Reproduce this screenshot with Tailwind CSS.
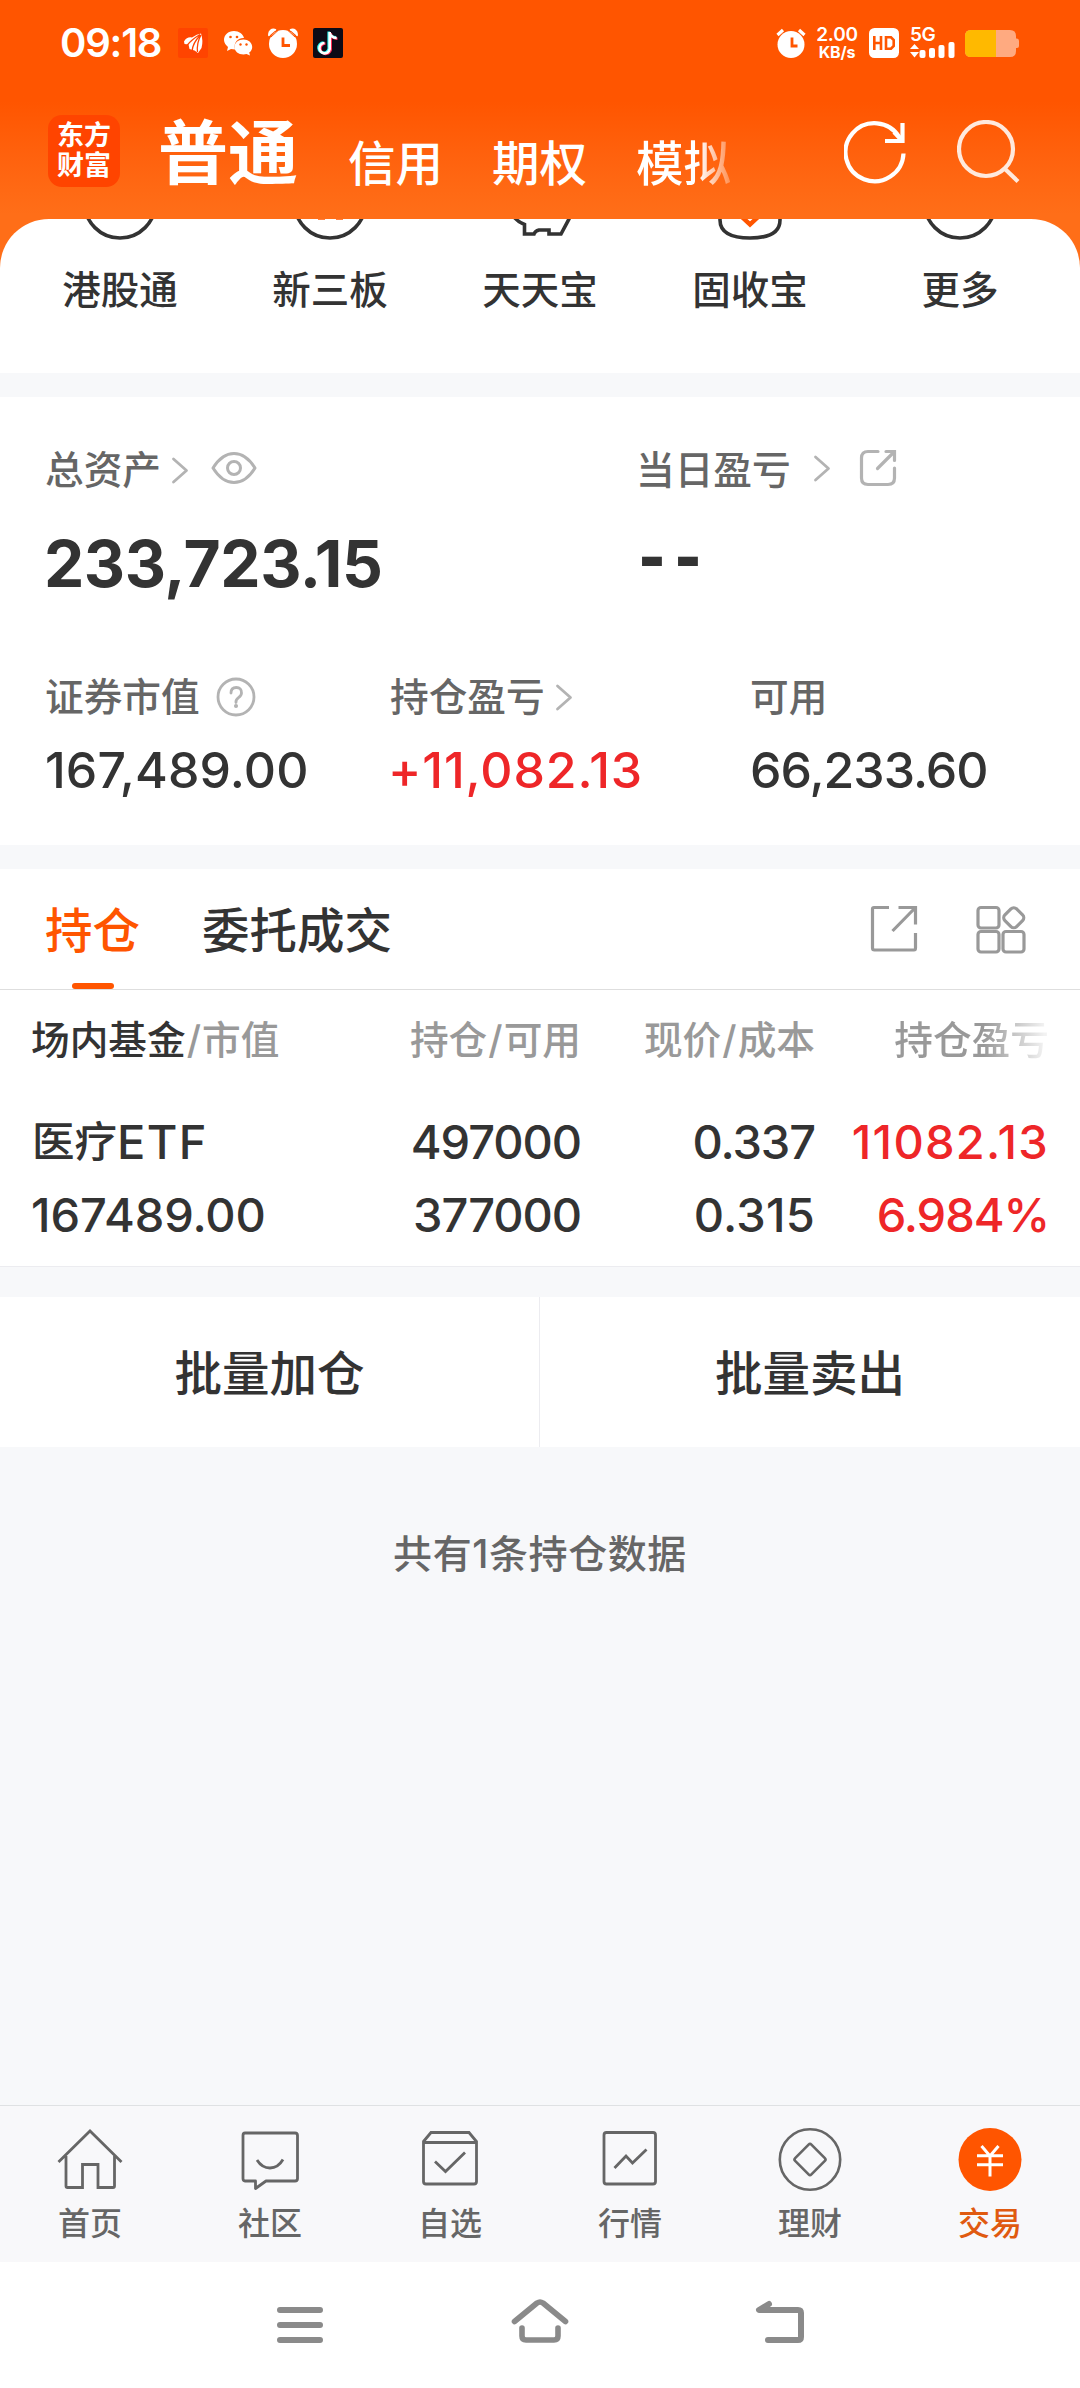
<!DOCTYPE html>
<html lang="zh-CN">
<head>
  <meta charset="UTF-8">
  <meta name="viewport" content="width=device-width, initial-scale=1.0">
  <title>交易</title>
  <script src="https://cdn.jsdelivr.net/npm/@tailwindcss/browser@4"></script>
</head>
<body class="bg-white">
<div class="w-[1080px] h-[2388px] flex flex-col overflow-hidden bg-[#f7f8fa] text-[#333] font-medium leading-none whitespace-nowrap font-['Inter','Noto_Sans_CJK_SC',sans-serif]">

  <!-- Header -->
  <header class="h-[268px] -mb-[49px] shrink-0 bg-linear-to-b from-[#ff5500] from-38% to-[#ff6e18] to-80% text-white">
    <!-- Status bar -->
    <div class="h-[85px] flex items-center pl-[60px] pr-[61px]">
      <span class="w-[118px] text-[40px] font-semibold tracking-[-0.03em]">09:18</span>
      <svg class="w-[30px] h-[30px]" viewBox="0 0 30 30">
        <rect width="30" height="30" rx="2" fill="#ff4400"/>
        <path d="M6 13.500Q9 8.500 14 9.500Q19 6 23 5.500Q25.500 13 23.500 20L20 25L16.500 22.500L11.500 21L10.500 16.500L6.500 16Z" fill="#fff"/>
        <path d="M9 17.500Q13 12 22 6.500M14 23.500Q14.500 15 22.500 7M19.500 24Q18.500 15 23 7" stroke="#ff4400" stroke-width="1.300" fill="none"/>
      </svg>
      <svg class="ml-[15px] w-[30px] h-[30px]" viewBox="0 0 30 30" fill="#fff">
        <path d="M11 3C5 3 1 7 1 12c0 3 2 5 4 7l-1 4 4-2 4 .5C10 14 16 9.500 21 10 20 6 16 3 11 3z"/>
        <path d="M20.500 11.500c-5 0-9 3-9 7.500s4 7.500 9 7.500l3-.4 3.500 1.500-.8-3c2-1.500 3-3.400 3-5.600 0-4.500-4-7.500-8.700-7.500z"/>
        <g fill="#ff5500"><circle cx="7.500" cy="9" r="1.300"/><circle cx="14" cy="9" r="1.300"/><circle cx="17.500" cy="16.500" r="1.200"/><circle cx="23.500" cy="16.500" r="1.200"/></g>
      </svg>
      <svg class="ml-[15px] w-[30px] h-[30px]" viewBox="0 0 30 30">
        <circle cx="15" cy="16" r="14" fill="#fff"/>
        <path d="M1 8C0 3 4 0 8 2M22 2C26 0 30 3 29 8" fill="#fff" stroke="#fff" stroke-width="1.500"/>
        <path d="M3 9L10 2.500M27 9L20 2.500" stroke="#ff5500" stroke-width="1"/>
        <path d="M15 9.500V17.500H22" stroke="#ff5500" stroke-width="2.800" fill="none"/>
      </svg>
      <svg class="ml-[15px] w-[30px] h-[30px]" viewBox="0 0 30 30" fill="none" stroke-width="2.600">
        <rect width="30" height="30" rx="2" fill="#0d0b16"/>
        <path d="M17.700 5V19.500A5.200 5.200 0 1 1 12.500 15.500M17.700 5.500C18.500 9 20 10.500 24.500 10.800" stroke="#fe2c55"/>
        <path d="M15.700 3.500V18.500A5.200 5.200 0 1 1 10.500 14.500M15.700 4C16.500 7 18 9 23 9.300" stroke="#25f4ee"/>
        <path d="M16.700 4V19A5.200 5.200 0 1 1 11.500 15M16.700 5C17.500 8 19 9.700 23.700 10" stroke="#fff"/>
      </svg>
      <svg class="ml-auto w-[30px] h-[30px]" viewBox="0 0 30 30" fill="none">
        <circle cx="15" cy="16.500" r="13.500" fill="#fff"/>
        <path d="M1.500 7L7 2M28.500 7L23 2" stroke="#fff" stroke-width="3.200"/>
        <path d="M16 9.500V18H21.500" stroke="#ff5500" stroke-width="2.800"/>
      </svg>
      <div class="ml-[11px] w-10 flex flex-col items-center font-semibold">
        <span class="text-[19px] h-[17px] leading-[15px] -tracking-[0.01em]">2.00</span>
        <span class="text-[16px] h-[14px] leading-[16px] font-bold -tracking-[0.01em]">KB/s</span>
      </div>
      <svg class="ml-3 w-[30px] h-[30px]" viewBox="0 0 30 30" fill="none" stroke="#ff5500" stroke-width="2.600">
        <rect width="30" height="30" rx="5.500" fill="#fff" stroke="none"/>
        <path d="M5.300 8V22M12 8V22M5.300 15H12M17 9.300H22L24.700 12V18L22 20.700H17Z"/>
      </svg>
      <div class="ml-[11px] w-[45px] h-[30px] flex flex-col">
        <span class="text-[19px] h-[15px] leading-[14px] font-semibold tracking-[-0.03em]">5G</span>
        <svg class="w-[45px] h-[16px] -mt-px" viewBox="0 0 45 16" fill="#fff">
          <path d="M0 7L4.500 2L9 7ZM0 10L4.500 15.500L9 10Z"/>
          <rect x="9.500" y="8" width="6" height="8" rx="2"/><rect x="19" y="6" width="6" height="10" rx="2"/><rect x="28.500" y="3" width="6" height="13" rx="2"/><rect x="38.500" y="0" width="6" height="16" rx="2"/>
        </svg>
      </div>
      <svg class="ml-[10px] mt-[2px] w-[54px] h-[27px]" viewBox="0 0 54 27">
        <path d="M6 0H45Q51 0 51 6V8.500H52Q54 8.500 54 11V16Q54 18 52 18H51V21Q51 27 45 27H6Q0 27 0 21V6Q0 0 6 0Z" fill="#ffaa80"/>
        <path d="M6 0H31V27H6Q0 27 0 21V6Q0 0 6 0Z" fill="#ffb900"/>
      </svg>
    </div>
    <!-- Account tabs -->
    <div class="h-[134px] flex items-start pl-12 pt-[30px]">
      <div class="w-[72px] h-[72px] rounded-[14px] bg-[#ff4400] grid content-center justify-center text-[27px] leading-[30px] font-bold">
        <span>东方</span><span>财富</span>
      </div>
      <span class="ml-[38px] w-[190px] text-[70px] leading-[77px] font-bold">普通</span>
      <span class="w-[144px] pt-6 text-[47.5px] leading-[49px]">信用</span>
      <span class="w-[144px] pt-6 text-[47.5px] leading-[49px]">期权</span>
      <span class="w-[104px] pt-6 text-[47.5px] leading-[49px] bg-linear-to-r from-white from-60% to-white/30 to-90% bg-clip-text text-transparent">模拟</span>
      <svg class="ml-[104px] mt-1 w-[66px] h-[66px]" viewBox="0 0 66 66" fill="none" stroke="#fff" stroke-width="4.200">
        <path d="M59.500 34.500A29 29 0 1 1 55.500 18.500"/>
        <path d="M58.500 4V22H41M58.500 22L50 13"/>
      </svg>
      <svg class="ml-[47px] mt-[5px] w-[66px] h-[66px]" viewBox="0 0 66 66" fill="none" stroke="#ffe9dd" stroke-width="4.200">
        <circle cx="29" cy="29" r="27"/><path d="M47.500 48.500L61 61.500"/>
      </svg>
    </div>
  </header>

  <!-- Shortcuts, scrolled half under the header -->
  <section class="h-[154px] shrink-0 rounded-t-[49px] bg-white overflow-hidden grid grid-cols-5 px-[15px] text-[38.5px] text-center">
    <div class="flex flex-col items-center">
      <svg class="w-[70px] h-[22px]" viewBox="0 0 70 22" fill="none" stroke="#333" stroke-width="3.600"><circle cx="35" cy="-16.500" r="35.500"/></svg>
      <span class="mt-[30px]">港股通</span>
    </div>
    <div class="flex flex-col items-center">
      <svg class="w-[70px] h-[22px]" viewBox="0 0 70 22" fill="none" stroke="#333" stroke-width="3.600"><circle cx="35" cy="-16.500" r="35.500"/><path d="M23 0H30M41 0H48" stroke="#ff5500" stroke-width="1.500"/></svg>
      <span class="mt-[30px]">新三板</span>
    </div>
    <div class="flex flex-col items-center">
      <svg class="w-[70px] h-[22px]" viewBox="0 0 70 22" fill="none" stroke="#333" stroke-width="3.600"><path d="M9 -2Q13 3 19.500 5.500V15H29Q30 12 34 11H44V15H56L64 0V-3"/></svg>
      <span class="mt-[30px]">天天宝</span>
    </div>
    <div class="flex flex-col items-center">
      <svg class="w-[70px] h-[22px]" viewBox="0 0 70 22" fill="none" stroke="#333" stroke-width="3.600"><path d="M5 -4V1Q5 19 35 19Q65 19 65 1V-4"/><path d="M26 -3L35 5.500L44 -3" stroke="#ff5500" stroke-width="4.500"/></svg>
      <span class="mt-[30px]">固收宝</span>
    </div>
    <div class="flex flex-col items-center">
      <svg class="w-[70px] h-[22px]" viewBox="0 0 70 22" fill="none" stroke="#333" stroke-width="3.600"><circle cx="35" cy="-16.500" r="35.500"/></svg>
      <span class="mt-[30px]">更多</span>
    </div>
  </section>

  <!-- Assets -->
  <section class="mt-6 h-[448px] shrink-0 bg-white pl-[45px] pt-[49px]">
    <div class="grid grid-cols-[591px_1fr] text-[38.7px] text-[#666]">
      <div class="h-12 flex items-center">
        <span>总资产</span>
        <svg class="ml-[10px] w-[18px] h-[28px]" viewBox="0 0 18 28" fill="none" stroke="#b3b3b3" stroke-width="2.800" stroke-linecap="round" stroke-linejoin="round"><path d="M2.500 3L15.500 14.500L2.500 26"/></svg>
        <svg class="ml-[21px] -mt-1 w-[48px] h-[34px]" viewBox="0 0 48 34" fill="none" stroke="#b3b3b3" stroke-width="3"><path d="M3 17Q12 2.500 24 2.500T45 17Q36 31.500 24 31.500T3 17Z" stroke-linejoin="round"/><circle cx="24" cy="17" r="6.500"/></svg>
      </div>
      <div class="h-12 flex items-center">
        <span>当日盈亏</span>
        <svg class="ml-[22px] -mt-1 w-[18px] h-[28px]" viewBox="0 0 18 28" fill="none" stroke="#b3b3b3" stroke-width="2.800" stroke-linecap="round" stroke-linejoin="round"><path d="M2.500 3L15.500 14.500L2.500 26"/></svg>
        <svg class="ml-[28px] -mt-1 w-[38px] h-[38px]" viewBox="0 0 38 38" fill="none" stroke="#b3b3b3" stroke-width="3.200" stroke-linecap="round"><path d="M19 2.500H9Q2.500 2.500 2.500 9V29Q2.500 35.500 9 35.500H29Q35.500 35.500 35.500 29V19M27 2.500H35.500V11.500M35 3L18.500 19.500"/></svg>
      </div>
    </div>
    <div class="mt-[37px] h-[64px] grid grid-cols-[593px_1fr] text-[64px] leading-[65px] font-bold">
      <span class="-ml-px tracking-[-0.007em]">233,723.15</span>
      <span class="pl-px text-[78px] leading-[48px] tracking-[0.13em] font-['Liberation_Sans']">--</span>
    </div>
    <div class="mt-[78px] grid grid-cols-[345px_360px_1fr] text-[38.7px] text-[#666]">
      <div class="h-12 flex items-center">
        <span>证券市值</span>
        <svg class="ml-[16px] w-[40px] h-[40px]" viewBox="0 0 40 40" fill="none" stroke="#b3b3b3" stroke-width="2.800"><circle cx="20" cy="20" r="18"/><path d="M15 16Q15 10.500 20.300 10.500T25.500 16Q25.500 18.500 22.500 20.700T20 25.500" stroke-linecap="round"/><circle cx="20" cy="29" r="1.300" fill="#b3b3b3" stroke-width="1.500"/></svg>
      </div>
      <div class="h-12 flex items-center">
        <span>持仓盈亏</span>
        <svg class="ml-[10px] w-[18px] h-[28px]" viewBox="0 0 18 28" fill="none" stroke="#b3b3b3" stroke-width="2.800" stroke-linecap="round" stroke-linejoin="round"><path d="M2.500 3L15.500 14.500L2.500 26"/></svg>
      </div>
      <div class="h-12 flex items-center">可用</div>
    </div>
    <div class="mt-[21px] grid grid-cols-[345px_360px_1fr] text-[50px] leading-[56px] font-[550]">
      <span class="tracking-[0.002em]">167,489.00</span>
      <span class="-ml-[2px] tracking-[0.018em] text-[#ee2628]">+11,082.13</span>
      <span class="tracking-[-0.02em]">66,233.60</span>
    </div>
  </section>

  <!-- Position tabs -->
  <section class="mt-6 h-[121px] shrink-0 bg-white border-b border-[#dedede] flex items-start pl-[45px] text-[47.5px]">
    <div class="w-[157px] h-[120px] flex flex-col text-[#ff5500]">
      <span class="mt-[38px]">持仓</span>
      <i class="mt-auto ml-[27px] w-[42px] h-[6px] rounded-full bg-[#ff5500]"></i>
    </div>
    <span class="mt-[38px]">委托成交</span>
    <svg class="ml-auto mt-[36px] w-[48px] h-[48px]" viewBox="0 0 48 48" fill="none" stroke="#999" stroke-width="3.200"><path d="M19 2.500H4Q2.500 2.500 2.500 4V43Q2.500 45 4.500 45H44Q45.500 45 45.500 43V28M28.500 2.500H45.500V19.500M45 3L22.500 26"/></svg>
    <svg class="ml-[58px] mr-[54px] mt-[36px] w-[50px] h-[50px]" viewBox="0 0 50 50" fill="none" stroke="#999" stroke-width="3.200"><rect x="2" y="2.500" width="21" height="20.500" rx="3"/><rect x="2" y="26.500" width="21" height="20.500" rx="3"/><rect x="27" y="26.500" width="21" height="20.500" rx="3"/><rect x="29.500" y="4.500" width="16.500" height="16.500" rx="4" transform="rotate(45 37.750 12.750)"/></svg>
  </section>

  <!-- Position table -->
  <section class="h-[277px] shrink-0 bg-white border-b border-[#ececf0] pl-[31px] pr-[31px] pt-[26px]">
    <div class="grid grid-cols-[250px_300px_234px_234px] text-[38.7px] leading-[48px] text-[#999] text-right">
      <span class="text-left"><b class="font-medium text-[#333]">场内基金</b><span class="px-px">/</span>市值</span>
      <span>持仓<span class="px-px">/</span>可用</span>
      <span>现价<span class="px-px">/</span>成本</span>
      <span class="bg-linear-to-r from-[#999] from-72% to-[#f2f2f2] to-98% bg-clip-text text-transparent">持仓盈亏</span>
    </div>
    <div class="mt-[50px] grid grid-cols-[250px_300px_234px_234px] gap-y-[17px] text-[47px] leading-[56px] font-[550] tracking-[-0.023em] text-right">
      <span class="text-left flex items-center tracking-[0.03em]"><span class="pl-px text-[42.5px] font-medium tracking-normal">医疗</span>ETF</span>
      <span>497000</span>
      <span>0.337</span>
      <span class="tracking-[0.027em] text-[#ee2628]">11082.13</span>
      <span class="text-left tracking-[-0.002em]">167489.00</span>
      <span>377000</span>
      <span class="tracking-[0.005em]">0.315</span>
      <span class="text-[#ee2628]">6.984%</span>
    </div>
  </section>

  <!-- Batch actions -->
  <section class="mt-[30px] h-[150px] shrink-0 bg-white grid grid-cols-2 text-[47.5px] text-center leading-[154px]">
    <span class="h-[150px] border-r border-[#ececf0]">批量加仓</span>
    <span class="h-[150px]">批量卖出</span>
  </section>
  <p class="mt-[86px] text-center text-[39px] leading-[41px] tracking-[0.015em] text-[#666]">共有1条持仓数据</p>

  <!-- Tab bar -->
  <nav class="mt-auto h-[157px] shrink-0 bg-[#f8f8fa] border-t border-[#dfe1e3] grid grid-cols-6 text-[32px] text-[#666]">
    <div class="flex flex-col items-center pt-[20px]">
      <svg class="w-[68px] h-[68px]" viewBox="0 0 68 68" fill="none" stroke="#666" stroke-width="2.800"><path d="M2.500 36L34 5L65.500 36M10 30V60Q10 61.500 11.500 61.500H26.500V38.500H42V61.500H57Q58.500 61.500 58.500 60V30"/></svg>
      <span class="mt-[14px]">首页</span>
    </div>
    <div class="flex flex-col items-center pt-[20px]">
      <svg class="w-[68px] h-[68px]" viewBox="0 0 68 68" fill="none" stroke="#666" stroke-width="2.800" stroke-linejoin="round"><path d="M9 7H59Q61.500 7 61.500 9.500V52.500Q61.500 55 59 55H30L19.500 62.500V55H9Q7 55 7 52.500V9.500Q7 7 9 7ZM21 34Q26 42 34 42T47 33.500"/></svg>
      <span class="mt-[14px]">社区</span>
    </div>
    <div class="flex flex-col items-center pt-[20px]">
      <svg class="w-[68px] h-[68px]" viewBox="0 0 68 68" fill="none" stroke="#666" stroke-width="2.800"><path d="M7.500 15.500L15 6.500H53L60.500 15.500V55.500Q60.500 58 58 58H10Q7.500 58 7.500 55.500ZM7.500 16.500H60.500M19 35.500L29.500 45.500L49 26.500"/></svg>
      <span class="mt-[14px]">自选</span>
    </div>
    <div class="flex flex-col items-center pt-[20px]">
      <svg class="w-[68px] h-[68px]" viewBox="0 0 68 68" fill="none" stroke="#666" stroke-width="2.800"><rect x="8" y="6.500" width="51.500" height="51.500" rx="2.500"/><path d="M18.500 42L30 30L36.500 37L50.500 23.500"/></svg>
      <span class="mt-[14px]">行情</span>
    </div>
    <div class="flex flex-col items-center pt-[20px]">
      <svg class="w-[68px] h-[68px]" viewBox="0 0 68 68" fill="none" stroke="#666" stroke-width="2.600"><circle cx="34" cy="33.500" r="30.200"/><rect x="22.500" y="22" width="23" height="23" rx="2" transform="rotate(45 34 33.500)"/></svg>
      <span class="mt-[14px]">理财</span>
    </div>
    <div class="flex flex-col items-center pt-[20px]">
      <svg class="w-[68px] h-[68px]" viewBox="0 0 68 68" fill="none" stroke="#fff" stroke-width="3"><circle cx="34" cy="33.500" r="31.500" fill="#ff5500" stroke="none"/><path d="M25.500 20L34 30L42.500 20M34 29V50.500M21 29.800H47M21 38.800H47"/></svg>
      <span class="mt-[14px] text-[#e05a10]">交易</span>
    </div>
  </nav>

  <!-- System navigation -->
  <div class="h-[126px] shrink-0 bg-white flex items-start justify-center pt-[36px]">
    <svg class="w-[60px] h-[52px]" viewBox="0 0 60 52" fill="none" stroke="#8a8a8a" stroke-width="6" stroke-linecap="round"><path d="M10 12H50M10 27H50M10 42H50"/></svg>
    <svg class="mx-[180px] w-[60px] h-[52px]" viewBox="0 0 60 52" fill="none" stroke="#8a8a8a" stroke-width="5.600" stroke-linecap="round"><path d="M4.500 23.500L27 5Q30 3 33 5L55.500 23.500M12 30V38Q12 42 16 42H44Q48 42 48 38V30" stroke-linejoin="round"/></svg>
    <svg class="w-[60px] h-[52px]" viewBox="0 0 60 52" fill="none" stroke="#8a8a8a" stroke-width="6" stroke-linecap="round" stroke-linejoin="round"><path d="M19 6L9 12H48Q51 12 51 15V39Q51 42 48 42H18"/></svg>
  </div>
</div>
</body>
</html>
